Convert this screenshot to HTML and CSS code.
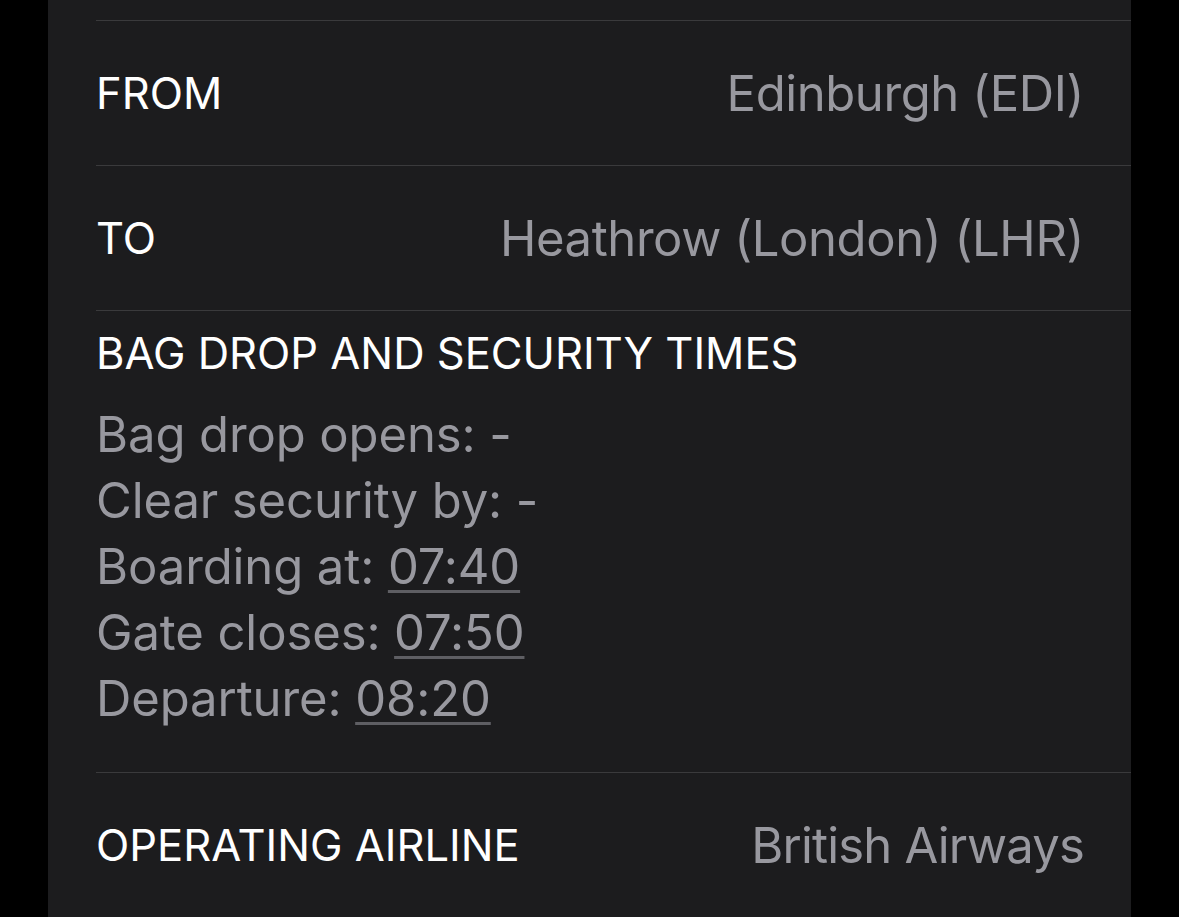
FILE: index.html
```html
<!DOCTYPE html>
<html lang="en">
<head>
<meta charset="utf-8">
<title>Flight details</title>
<link rel="stylesheet" href="styles.css">
</head>
<body>
<div class="page">
  <div class="card">
    <div class="top-spacer"></div>
    <div class="row">
      <span class="label">FROM</span>
      <span class="value">Edinburgh (EDI)</span>
    </div>
    <div class="row">
      <span class="label">TO</span>
      <span class="value">Heathrow (London) (LHR)</span>
    </div>
    <div class="section">
      <div class="label section-title">BAG DROP AND SECURITY TIMES</div>
      <div class="times">
        <div class="time-line">Bag drop opens: -</div>
        <div class="time-line">Clear security by: -</div>
        <div class="time-line">Boarding at: <span class="link">07:40</span></div>
        <div class="time-line">Gate closes: <span class="link">07:50</span></div>
        <div class="time-line">Departure: <span class="link">08:20</span></div>
      </div>
    </div>
    <div class="row">
      <span class="label">OPERATING AIRLINE</span>
      <span class="value airline">British Airways</span>
    </div>
  </div>
</div>
</body>
</html>
```
FILE: styles.css
```css
html, body {
  margin: 0;
  padding: 0;
  background: #000;
  height: 100%;
  overflow: hidden;
}
.page {
  padding: 0 48px;
  height: 917px;
}
.card {
  background: #1c1c1e;
  height: 100%;
  padding-left: 48px;
  font-family: Inter, "Noto Sans", sans-serif;
  -webkit-font-smoothing: antialiased;
}
.top-spacer {
  height: 20px;
  border-bottom: 1px solid #3a3a3c;
}
.row {
  height: 144px;
  display: flex;
  align-items: center;
  justify-content: space-between;
  padding-right: 47px;
  border-bottom: 1px solid #3a3a3c;
}
.label {
  color: #ffffff;
  font-size: 43.5px;
  letter-spacing: 0;
}
.value {
  color: #98989f;
  font-size: 49px;
  letter-spacing: -0.4px;
}
.value.airline {
  letter-spacing: -0.8px;
}
.section {
  height: 462px;
  border-bottom: 1px solid #3a3a3c;
  padding-top: 16px;
  box-sizing: border-box;
}
.section-title {
  line-height: 52px;
}
.times {
  margin-top: 23px;
}
.time-line {
  color: #98989f;
  font-size: 49px;
  line-height: 66px;
  letter-spacing: -0.1px;
}
.link {
  text-decoration: underline;
  text-decoration-color: #5e5e63;
  text-decoration-thickness: 3px;
  text-underline-offset: 6px;
}
```
